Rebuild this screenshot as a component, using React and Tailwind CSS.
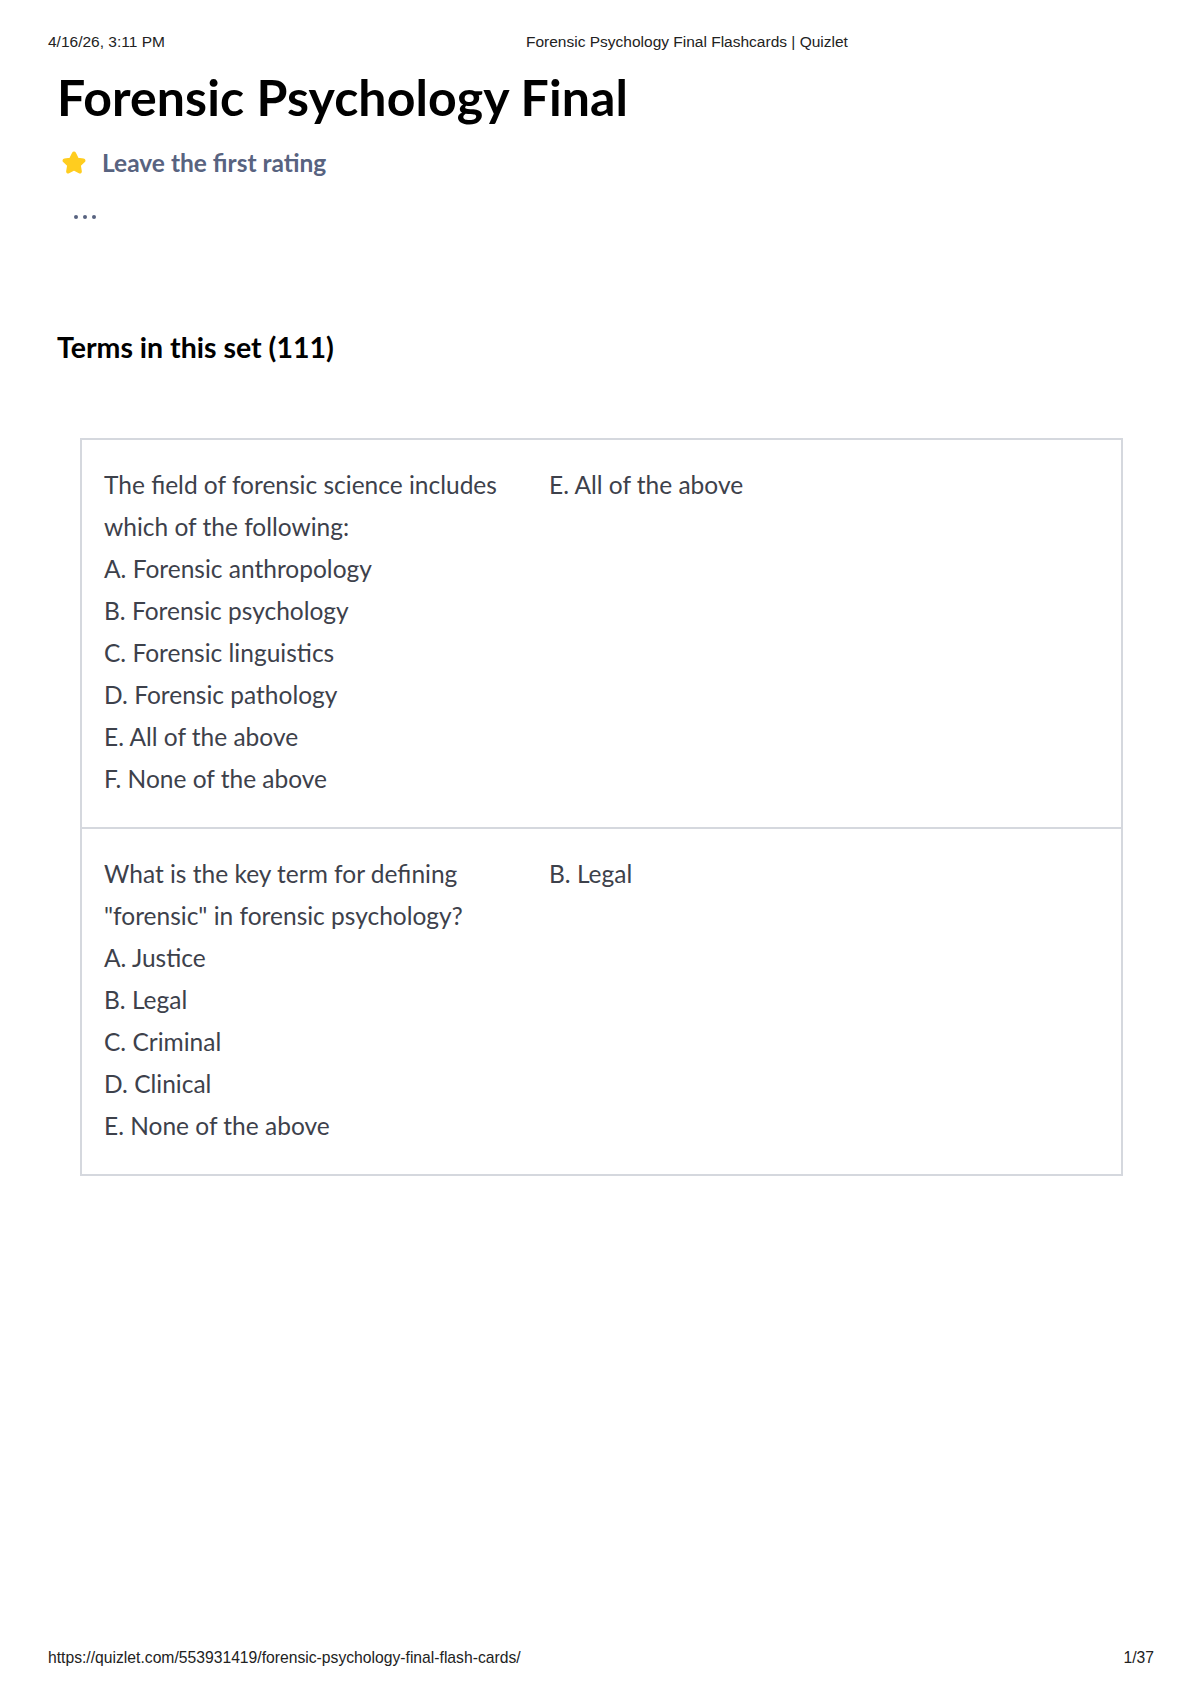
import React from "react";

const cards = [
  {
    term: [
      "The field of forensic science includes",
      "which of the following:",
      "A. Forensic anthropology",
      "B. Forensic psychology",
      "C. Forensic linguistics",
      "D. Forensic pathology",
      "E. All of the above",
      "F. None of the above",
    ],
    def: "E. All of the above",
  },
  {
    term: [
      "What is the key term for defining",
      "\"forensic\" in forensic psychology?",
      "A. Justice",
      "B. Legal",
      "C. Criminal",
      "D. Clinical",
      "E. None of the above",
    ],
    def: "B. Legal",
  },
];

function Star() {
  return (
    <svg width="26" height="26" viewBox="0 0 24 24" aria-hidden="true">
      <path
        d="M12 2.2c.5 0 .9.3 1.1.7l2.4 4.9 5.4.8c.9.1 1.3 1.3.6 1.9l-3.9 3.8.9 5.4c.2.9-.8 1.6-1.6 1.2L12 18.3l-4.9 2.6c-.8.4-1.8-.3-1.6-1.2l.9-5.4-3.9-3.8c-.7-.6-.3-1.8.6-1.9l5.4-.8 2.4-4.9c.2-.4.6-.7 1.1-.7z"
        fill="#ffcd1f"
        stroke="#ffcd1f"
        strokeWidth="1.5"
        strokeLinejoin="round"
      />
    </svg>
  );
}

export default function App() {
  return (
    <div className="w-[1200px] h-[1700px] bg-white flex flex-col text-black">
      <header className="pt-[33px] px-[48px] flex text-[15.5px] leading-[18px] text-[#222]" style={{ fontFamily: '"Liberation Sans", Arial, sans-serif' }}>
        <div className="w-[478px]">4/16/26, 3:11 PM</div>
        <div>Forensic Psychology Final Flashcards | Quizlet</div>
      </header>

      <main className="pl-[57px]" style={{ fontFamily: 'Lato, "Open Sans", sans-serif' }}>
        <h1 className="mt-[21px] text-[50px] leading-[50px] font-bold tracking-[0.1px] text-black">
          Forensic Psychology Final
        </h1>

        <div className="mt-[27px] flex items-center h-[28px] pl-[4px] gap-[15px]">
          <Star />
          <span className="text-[24.5px] leading-[28px] font-bold text-[#586380]">Leave the first rating</span>
        </div>

        <div className="mt-[37px] pl-[17px] flex gap-[5px] items-center h-[6px]">
          <span className="w-[4px] h-[4px] rounded-full bg-[#586380]"></span>
          <span className="w-[4px] h-[4px] rounded-full bg-[#586380]"></span>
          <span className="w-[4px] h-[4px] rounded-full bg-[#586380]"></span>
        </div>

        <h2 className="mt-[113px] text-[28.5px] leading-[29px] font-bold text-black">
          Terms in this set (111)
        </h2>

        <div className="mt-[76px] ml-[23px] w-[1043px] flex flex-col">
          {cards.map((c, i) => (
            <div
              key={i}
              className={
                "border-2 border-[#d5d8de] flex pl-[22px] pt-[24px] pb-[27px] text-[24.5px] leading-[42px] text-[#3d414b] " +
                (i > 0 ? "border-t-0" : "")
              }
            >
              <div className="w-[445px] shrink-0">
                {c.term.map((t, j) => (
                  <div key={j}>{t}</div>
                ))}
              </div>
              <div>{c.def}</div>
            </div>
          ))}
        </div>
      </main>

      <footer className="mt-auto pb-[33px] px-[48px] flex justify-between text-[15.7px] leading-[18px] text-[#222]" style={{ fontFamily: '"Liberation Sans", Arial, sans-serif' }}>
        <div>https://quizlet.com/553931419/forensic-psychology-final-flash-cards/</div>
        <div className="mr-[-2px]">1/37</div>
      </footer>
    </div>
  );
}
